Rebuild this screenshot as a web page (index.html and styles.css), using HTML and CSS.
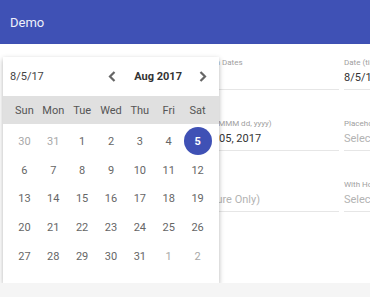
FILE: index.html
```html
<!DOCTYPE html>
<html lang="en">

<head>
    <meta charset="UTF-8">
    <meta name="viewport" content="width=device-width, initial-scale=1.0">
    <title>Demo</title>
    <link rel="stylesheet" href="styles.css">
</head>

<body>
    <header class="app-bar">
        <h1>Demo</h1>
    </header>

    <main class="card">
        <div class="fields">
            <div class="field">
                <label>Date</label>
                <div class="value">8/5/17</div>
            </div>
            <div class="field">
                <label>Month Dates</label>
                <div class="value"></div>
            </div>
            <div class="field">
                <label>Date (time)</label>
                <div class="value">8/5/17</div>
            </div>

            <div class="field">
                <label>Date</label>
                <div class="value"></div>
            </div>
            <div class="field">
                <label>Date (MMM dd, yyyy)</label>
                <div class="value">Aug 05, 2017</div>
            </div>
            <div class="field">
                <label>Placeholder</label>
                <div class="value placeholder">Select</div>
            </div>

            <div class="field">
                <label>Date</label>
                <div class="value"></div>
            </div>
            <div class="field">
                <label></label>
                <div class="value placeholder">(Future Only)</div>
            </div>
            <div class="field">
                <label>With Hours</label>
                <div class="value placeholder">Select</div>
            </div>
        </div>

        <!-- date picker popup, open over the first field -->
        <div class="picker">
            <div class="picker-head">
                <span class="picker-input">8/5/17</span>
                <div class="picker-nav">
                    <svg width="8" height="11" viewBox="0 0 8 11"><path d="M6.5 1 L2 5.5 L6.5 10" fill="none" stroke="#666" stroke-width="2.2"/></svg>
                    <span class="picker-month">Aug 2017</span>
                    <svg width="8" height="11" viewBox="0 0 8 11"><path d="M1.5 1 L6 5.5 L1.5 10" fill="none" stroke="#666" stroke-width="2.2"/></svg>
                </div>
            </div>
            <div class="weekdays">
                <span>Sun</span><span>Mon</span><span>Tue</span><span>Wed</span><span>Thu</span><span>Fri</span><span>Sat</span>
            </div>
            <div class="days">
                <span class="other">30</span><span class="other">31</span><span>1</span><span>2</span><span>3</span><span>4</span><span class="selected"><b>5</b></span>
                <span>6</span><span>7</span><span>8</span><span>9</span><span>10</span><span>11</span><span>12</span>
                <span>13</span><span>14</span><span>15</span><span>16</span><span>17</span><span>18</span><span>19</span>
                <span>20</span><span>21</span><span>22</span><span>23</span><span>24</span><span>25</span><span>26</span>
                <span>27</span><span>28</span><span>29</span><span>30</span><span>31</span><span class="other">1</span><span class="other">2</span>
            </div>
        </div>
    </main>
</body>

</html>
```

FILE: styles.css
```css
body {
    font-family: Roboto, 'Liberation Sans', sans-serif;
    background-color: #f5f5f5;
    margin: 0;
    overflow: hidden;
}

.app-bar {
    background-color: #3f51b5;
    height: 44px;
    display: flex;
    align-items: center;
    padding-left: 10px;
}

.app-bar h1 {
    margin: 0;
    font-size: 13px;
    font-weight: 400;
    color: #eef0fa;
}

.card {
    position: relative;
    background: #fff;
    height: 239px;
    box-shadow: 0 1px 2px rgba(0, 0, 0, 0.2);
}

.fields {
    display: grid;
    grid-template-columns: repeat(3, 142px);
    column-gap: 5px;
    row-gap: 28px;
    padding: 13px 0 0 50px;
    width: max-content;
}

.field {
    border-bottom: 1px solid #e6e6e6;
    padding-bottom: 3px;
}

.field label {
    display: block;
    height: 11px;
    margin-bottom: 2px;
    font-size: 8px;
    line-height: 11px;
    color: #a0a0a0;
    white-space: nowrap;
}

.field .value {
    height: 16px;
    font-size: 11px;
    line-height: 16px;
    color: #333;
    white-space: nowrap;
}

.field .placeholder {
    color: #b3b3b3;
}

/* picker */

.picker {
    position: absolute;
    left: 3px;
    top: 13px;
    width: 216px;
    height: 226px;
    background: #fff;
    box-shadow: 0 2px 5px rgba(0, 0, 0, 0.3);
}

.picker-head {
    height: 39px;
    display: flex;
    align-items: center;
    justify-content: space-between;
    padding: 0 12px 0 7px;
}

.picker-input {
    font-size: 11px;
    color: #444;
}

.picker-nav {
    display: flex;
    align-items: center;
}

.picker-month {
    font-size: 11px;
    font-weight: 700;
    color: #333;
    margin: 0 17px 0 18px;
}

.weekdays,
.days {
    display: grid;
    grid-template-columns: repeat(7, 1fr);
    padding: 0 7px;
}

.weekdays {
    background: #e0e0e0;
    height: 28px;
    align-items: center;
}

.weekdays span {
    text-align: center;
    font-size: 11px;
    color: #555;
}

.days {
    padding-top: 3px;
    grid-auto-rows: 28.75px;
}

.days span {
    display: flex;
    align-items: center;
    justify-content: center;
    font-size: 11px;
    color: #666;
}

.days .other {
    color: #a8a8a8;
}

.days .selected b {
    width: 28px;
    height: 28px;
    border-radius: 50%;
    background: #3f51b5;
    color: #fff;
    display: flex;
    align-items: center;
    justify-content: center;
    font-size: 11px;
}
```
